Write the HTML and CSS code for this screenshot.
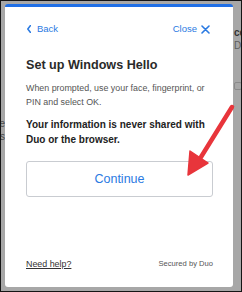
FILE: index.html
```html
<!DOCTYPE html>
<html lang="en">
<head>
<meta charset="utf-8">
<title>Set up Windows Hello</title>
<link rel="stylesheet" href="styles.css">
</head>
<body>
<div class="frame">
  <div class="side side-left">
    <span class="ghost ghost-e">re</span>
    <span class="ghost ghost-s">is</span>
  </div>
  <div class="card">
    <div class="nav">
      <a class="nav-link back" href="#"><svg class="chev" width="4" height="8" viewBox="0 0 4 8"><path d="M3.3 0.7 L0.8 4 L3.3 7.3" fill="none" stroke="currentColor" stroke-width="1.5" stroke-linecap="round" stroke-linejoin="round"/></svg>Back</a>
      <a class="nav-link close" href="#">Close<svg class="x" width="9" height="9" viewBox="0 0 9 9"><path d="M1 1 L8 8 M8 1 L1 8" fill="none" stroke="currentColor" stroke-width="1.6" stroke-linecap="round"/></svg></a>
    </div>
    <h1 class="title">Set up Windows Hello</h1>
    <p class="desc">When prompted, use your face, fingerprint, or PIN and select OK.</p>
    <p class="note">Your information is never shared with Duo or the browser.</p>
    <button class="continue" type="button">Continue</button>
    <div class="footer">
      <a class="help" href="#">Need help?</a>
      <span class="secured">Secured by Duo</span>
    </div>
  </div>
  <div class="side side-right">
    <span class="ghost ghost-ce">ce</span>
    <span class="ghost ghost-d">D,</span>
    <span class="ghost-box"></span>
  </div>
  <svg class="arrow" width="242" height="292" viewBox="0 0 242 292">
    <line x1="232" y1="107" x2="201" y2="157" stroke="#e8353b" stroke-width="4.5" stroke-linecap="round"/>
    <polygon points="190,151 188,175 208,163" fill="#e8353b" stroke="#e8353b" stroke-width="1.5" stroke-linejoin="round"/>
  </svg>
</div>
</body>
</html>
```

FILE: styles.css
```css
* { box-sizing: border-box; }

html, body {
  margin: 0;
  padding: 0;
  background: #ffffff;
}

body {
  font-family: "Liberation Sans", Arial, sans-serif;
}

.frame {
  position: relative;
  width: 242px;
  height: 292px;
  border: 1px solid #151515;
  background: #a7a7a7;
  display: flex;
  padding: 3px 0 4px 0;
  overflow: hidden;
}

.side {
  display: flex;
  flex-direction: column;
  overflow: hidden;
}

.side-left {
  width: 4px;
  align-items: flex-end;
  padding-top: 114px;
}

.side-right {
  flex: 1;
  padding-top: 23px;
  padding-left: 1px;
}

.ghost {
  font-size: 10px;
  line-height: 12px;
  white-space: nowrap;
  color: #4a4a4a;
}

.ghost-s { margin-top: 1px; }

.ghost-ce { font-weight: bold; color: #333333; }

.ghost-d { color: #5e5e5e; margin-top: 1px; }

.ghost-box {
  display: block;
  width: 8px;
  height: 8px;
  margin-top: 30px;
  border: 1px solid #8a8a8a;
  border-radius: 2px;
}

.card {
  width: 228px;
  background: #ffffff;
  border-top: 3px solid #1f6fe6;
  border-radius: 3px;
  padding: 15px 20px 17px 21px;
  display: flex;
  flex-direction: column;
}

.nav {
  display: flex;
  justify-content: space-between;
  align-items: center;
  height: 14px;
  padding-right: 3px;
}

.nav-link {
  display: flex;
  align-items: center;
  color: #2a7ae2;
  text-decoration: none;
  font-size: 9.5px;
  line-height: 14px;
}

.chev { margin-right: 6px; margin-left: 1px; }

.x { margin-left: 4px; }

.title {
  margin: 21px 0 0 0;
  font-size: 12.6px;
  line-height: 17px;
  font-weight: bold;
  color: #2a2a2a;
}

.desc {
  margin: 7px 0 0 0;
  font-size: 8.9px;
  line-height: 14px;
  color: #555555;
}

.note {
  margin: 7.5px 0 0 0;
  font-size: 10px;
  line-height: 15px;
  font-weight: bold;
  color: #222222;
}

.continue {
  margin-top: 14.5px;
  height: 36px;
  width: 100%;
  background: #ffffff;
  border: 1px solid #c9ccd1;
  border-radius: 3px;
  font-family: "Liberation Sans", Arial, sans-serif;
  font-size: 12.5px;
  color: #2a7ae2;
  padding: 0;
}

.footer {
  margin-top: auto;
  display: flex;
  justify-content: space-between;
  align-items: center;
  height: 12px;
}

.help {
  font-size: 8.9px;
  line-height: 12px;
  color: #333333;
  text-decoration: underline;
}

.secured {
  font-size: 7.6px;
  line-height: 12px;
  color: #555555;
}

.arrow {
  position: absolute;
  left: -1px;
  top: -1px;
  pointer-events: none;
}
```
